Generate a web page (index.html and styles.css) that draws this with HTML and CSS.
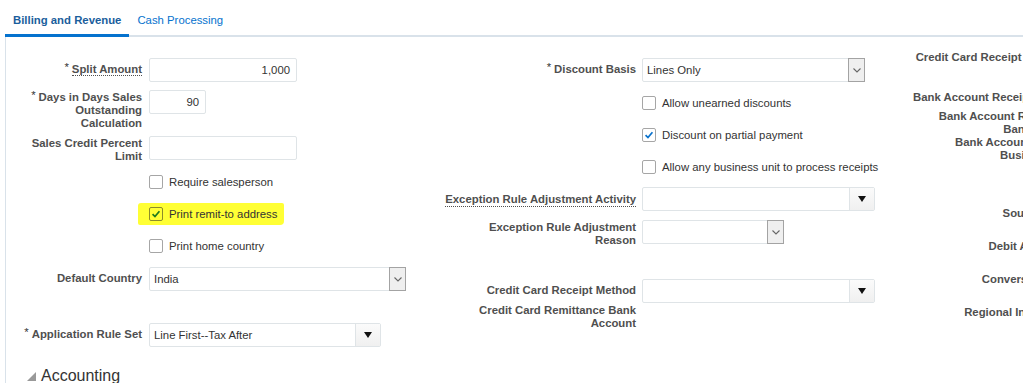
FILE: index.html
```html
<!DOCTYPE html>
<html lang='en'>
<head>
    <meta charset='UTF-8'>
    <title>Receivables System Options</title>

    <link rel="stylesheet" href="styles.css">
</head>
<body>

<nav class='tabs'>
    <a href='#' class='tab active'>Billing and Revenue</a>
    <a href='#' class='tab'>Cash Processing</a>
</nav>

<section class='panel'>
    <div class='form'>

        <!-- Left column -->
        <div class='col col-left'>
            <div class='row'>
                <label class='lbl'><span class='req'>*</span><span class='help'>Split Amount</span></label>
                <div class='text-input num w-148'>1,000</div>
            </div>
            <div class='row mt-8'>
                <label class='lbl multi'><span class='req'>*</span>Days in Days Sales Outstanding Calculation</label>
                <div class='text-input num w-57'>90</div>
            </div>
            <div class='row mt-6'>
                <label class='lbl multi'>Sales Credit Percent Limit</label>
                <div class='text-input w-148'></div>
            </div>
            <div class='checks checks-left'>
                <div class='check-row'><span class='box'></span>Require salesperson</div>
                <div class='check-row'>
                    <span class='marker'><span class='box checked green'>
                        <svg viewBox='0 0 14 14'><path d='M3 7.2 L5.8 10 L11 3.8'/></svg>
                    </span>Print remit-to address</span>
                </div>
                <div class='check-row'><span class='box'></span>Print home country</div>
            </div>
            <div class='row mt-5'>
                <label class='lbl'>Default Country</label>
                <div class='choice w-257'>
                    <span class='value'>India</span>
                    <span class='chevron'><svg viewBox='0 0 8 5'><path d='M0.5 0.5 L4 4 L7.5 0.5'/></svg></span>
                </div>
            </div>
            <div class='row mt-32'>
                <label class='lbl'><span class='req'>*</span>Application Rule Set</label>
                <div class='lov w-232'>
                    <span class='value'>Line First--Tax After</span>
                    <span class='drop'><svg viewBox='0 0 8 6'><path d='M0 0 H8 L4 6 Z'/></svg></span>
                </div>
            </div>
        </div>

        <!-- Middle column -->
        <div class='col col-mid'>
            <div class='row'>
                <label class='lbl'><span class='req'>*</span>Discount Basis</label>
                <div class='choice w-223'>
                    <span class='value'>Lines Only</span>
                    <span class='chevron'><svg viewBox='0 0 8 5'><path d='M0.5 0.5 L4 4 L7.5 0.5'/></svg></span>
                </div>
            </div>
            <div class='checks checks-mid'>
                <div class='check-row'><span class='box'></span>Allow unearned discounts</div>
                <div class='check-row'><span class='box checked'>
                    <svg viewBox='0 0 14 14'><path d='M3 7.2 L5.8 10 L11 3.8'/></svg>
                </span>Discount on partial payment</div>
                <div class='check-row'><span class='box'></span>Allow any business unit to process receipts</div>
            </div>
            <div class='row mt-4'>
                <label class='lbl nowrap'><span class='help'>Exception Rule Adjustment Activity</span></label>
                <div class='lov w-233'>
                    <span class='value'></span>
                    <span class='drop'><svg viewBox='0 0 8 6'><path d='M0 0 H8 L4 6 Z'/></svg></span>
                </div>
            </div>
            <div class='row mt-9'>
                <label class='lbl multi'>Exception Rule Adjustment Reason</label>
                <div class='choice w-142'>
                    <span class='value'></span>
                    <span class='chevron'><svg viewBox='0 0 8 5'><path d='M0.5 0.5 L4 4 L7.5 0.5'/></svg></span>
                </div>
            </div>
            <div class='row mt-32'>
                <label class='lbl'>Credit Card Receipt Method</label>
                <div class='lov w-233'>
                    <span class='value'></span>
                    <span class='drop'><svg viewBox='0 0 8 6'><path d='M0 0 H8 L4 6 Z'/></svg></span>
                </div>
            </div>
            <div class='row'>
                <label class='lbl multi'>Credit Card Remittance Bank Account</label>
            </div>
        </div>

        <!-- Right column, cut off by the window -->
        <div class='col col-right'>
            <label class='lbl r1'>Credit Card Receipt Method</label>
            <label class='lbl r2'>Bank Account Receipt Class</label>
            <label class='lbl r3'>Bank Account Receipts<br>Bank Name</label>
            <label class='lbl'>Bank Account Name<br>Business ID</label>
            <label class='lbl r5'>Source Key</label>
            <label class='lbl r6'>Debit Account</label>
            <label class='lbl r6'>Conversion IDs</label>
            <label class='lbl r6'>Regional Invoicing</label>
        </div>
    </div>

    <h3 class='section'><span class='disclose'></span>Accounting</h3>
</section>

</body>
</html>
```

FILE: styles.css
```css
body {
    margin: 0;
    width: 1023px;
    height: 383px;
    overflow: hidden;
    font-family: "Liberation Sans", Arial, sans-serif;
    font-size: 11.35px;
    color: #333;
    background: #fff;
}

/* Tabs */
.tabs {
    display: flex;
    margin-left: 5px;
    border-bottom: 2px solid #d9e2ea;
}

.tab {
    padding: 13px 8px 7px;
    line-height: 14px;
    color: #0572ce;
    text-decoration: none;
    border-bottom: 3px solid transparent;
    margin-bottom: -2px;
}

.tab.active {
    font-weight: bold;
    color: #1a5e9c;
    border-bottom-color: #0572ce;
}

/* Panel */
.panel {
    margin-left: 5px;
    border-left: 1px solid #d9e2ea;
    height: 400px;
    padding-top: 13px;
}

.form {
    display: flex;
    padding-left: 16px;
}

.col {
    display: flex;
    flex-direction: column;
    flex: none;
}

.col-left {
    width: 384px;
    padding-top: 8px;
    --lbl: 120px;
    --gap: 7px;
}

.col-mid {
    width: 419px;
    margin-left: 50px;
    padding-top: 8px;
    --lbl: 180px;
    --gap: 6px;
}

.col-right {
    width: 152px;
    margin-left: 38px;
}

.row {
    display: flex;
    align-items: flex-start;
    gap: var(--gap);
}

.lbl {
    flex: none;
    width: var(--lbl);
    padding-top: 5px;
    text-align: right;
    font-weight: bold;
    line-height: 13px;
    color: #4f4f4f;
}

.lbl.multi {
    padding-top: 1px;
}

.lbl.nowrap {
    display: flex;
    justify-content: flex-end;
    padding-top: 6px;
    white-space: nowrap;
}

.col-right .lbl {
    width: 152px;
    padding-top: 0;
    white-space: nowrap;
}

.col-right .r1 { margin-top: 1px; }
.col-right .r2 { margin-top: 27px; }
.col-right .r3 { margin-top: 6px; }
.col-right .r5 { margin-top: 45px; }
.col-right .r6 { margin-top: 20px; }

.req {
    font-weight: normal;
    color: #333;
    margin-right: 3px;
    position: relative;
    top: -2px;
}

.help {
    border-bottom: 1px dotted #4f4f4f;
}

.mt-4 { margin-top: 4px; }
.mt-5 { margin-top: 5px; }
.mt-6 { margin-top: 6px; }
.mt-8 { margin-top: 8px; }
.mt-9 { margin-top: 9px; }
.mt-32 { margin-top: 32px; }

/* Inputs */
.text-input,
.choice,
.lov {
    box-sizing: border-box;
    height: 24px;
    border: 1px solid #dfe4e7;
    border-radius: 2px;
    background: #fff;
    line-height: 22px;
    color: #333;
}

.text-input {
    padding: 0 6px;
}

.text-input.num {
    text-align: right;
}

.choice,
.lov {
    display: flex;
}

.value {
    flex: 1;
    padding: 0 4px;
    white-space: nowrap;
    overflow: hidden;
}

.chevron {
    box-sizing: border-box;
    width: 17px;
    height: 24px;
    margin: -1px -1px -1px 0;
    border: 1px solid #a3a3a3;
    background: #efefef;
    display: flex;
    align-items: center;
    justify-content: center;
}

.chevron svg {
    width: 8px;
    height: 5px;
    fill: none;
    stroke: #666;
    stroke-width: 1.1;
}

.drop {
    width: 24px;
    border-left: 1px solid #dfe4e7;
    background: linear-gradient(#fbfbfb, #f0f0f0);
    display: flex;
    align-items: center;
    justify-content: center;
}

.drop svg {
    width: 8px;
    height: 6px;
    fill: #111;
}

.w-57 { width: 57px; }
.w-142 { width: 142px; }
.w-148 { width: 148px; }
.w-223 { width: 223px; }
.w-232 { width: 232px; }
.w-233 { width: 233px; }
.w-257 { width: 257px; }

/* Checkboxes */
.checks {
    display: flex;
    flex-direction: column;
    padding-left: calc(var(--lbl) + var(--gap));
}

.checks-left { margin-top: 3px; }
.checks-mid { margin-top: 5px; }

.check-row {
    display: flex;
    align-items: center;
    height: 32px;
    color: #333;
    white-space: nowrap;
}

.box {
    box-sizing: border-box;
    width: 14px;
    height: 14px;
    margin-right: 6px;
    border: 1px solid #a6a6a6;
    border-radius: 2px;
    background: #fff;
    flex: none;
}

.box svg {
    display: block;
    width: 12px;
    height: 12px;
    fill: none;
    stroke: #0a72cc;
    stroke-width: 2;
}

.box.green {
    background: transparent;
    border-color: #8c8c2a;
}

.box.green svg {
    stroke: #1f7a1f;
}

.marker {
    display: flex;
    align-items: center;
    height: 22px;
    margin-left: -11px;
    padding: 0 7px 0 11px;
    background: #ffff35;
    border-radius: 3px 2px 4px 2px;
}

/* Section header */
.section {
    display: flex;
    align-items: center;
    margin: 19px 0 0 21px;
    font-size: 16px;
    font-weight: normal;
    line-height: 20px;
    color: #333;
}

.disclose {
    width: 0;
    height: 0;
    margin-right: 5px;
    border-left: 9px solid transparent;
    border-bottom: 9px solid #999;
}
```
